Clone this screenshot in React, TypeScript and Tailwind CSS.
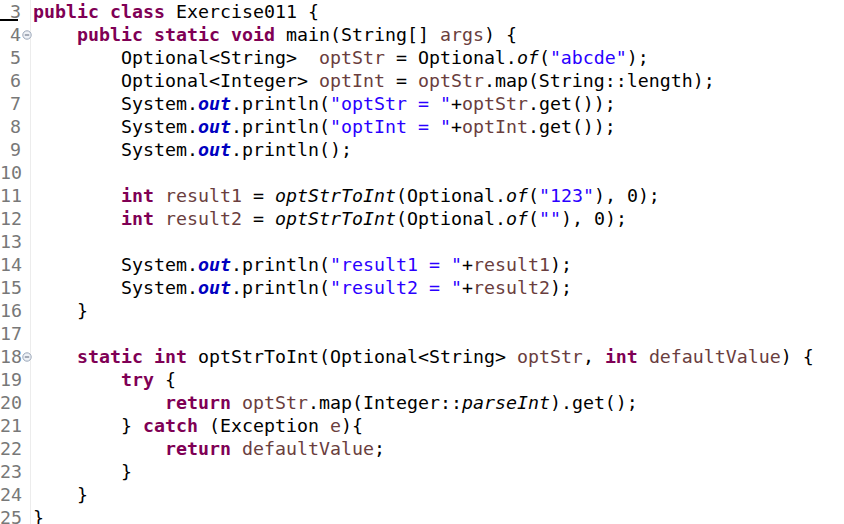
type Seg = [string, string?];

const K = 'k';
const V = 'v';
const S = 's';
const F = 'f';
const I = 'i';

const styles: Record<string, string> = {
  k: 'font-bold text-[#7f0055]',
  v: 'text-[#6a3e3e]',
  s: 'text-[#2a00ff]',
  f: 'font-bold italic text-[#0000c0]',
  i: 'italic text-black',
};

const lines: { n: number; fold?: boolean; segs: Seg[] }[] = [
  { n: 3, segs: [['public', K], [' '], ['class', K], [' Exercise011 {']] },
  { n: 4, fold: true, segs: [['    '], ['public', K], [' '], ['static', K], [' '], ['void', K], [' main(String[] '], ['args', V], [') {']] },
  { n: 5, segs: [['        Optional<String>  '], ['optStr', V], [' = Optional.'], ['of', I], ['('], ['"abcde"', S], [');']] },
  { n: 6, segs: [['        Optional<Integer> '], ['optInt', V], [' = '], ['optStr', V], ['.map(String::length);']] },
  { n: 7, segs: [['        System.'], ['out', F], ['.println('], ['"optStr = "', S], ['+'], ['optStr', V], ['.get());']] },
  { n: 8, segs: [['        System.'], ['out', F], ['.println('], ['"optInt = "', S], ['+'], ['optInt', V], ['.get());']] },
  { n: 9, segs: [['        System.'], ['out', F], ['.println();']] },
  { n: 10, segs: [] },
  { n: 11, segs: [['        '], ['int', K], [' '], ['result1', V], [' = '], ['optStrToInt', I], ['(Optional.'], ['of', I], ['('], ['"123"', S], ['), 0);']] },
  { n: 12, segs: [['        '], ['int', K], [' '], ['result2', V], [' = '], ['optStrToInt', I], ['(Optional.'], ['of', I], ['('], ['""', S], ['), 0);']] },
  { n: 13, segs: [] },
  { n: 14, segs: [['        System.'], ['out', F], ['.println('], ['"result1 = "', S], ['+'], ['result1', V], [');']] },
  { n: 15, segs: [['        System.'], ['out', F], ['.println('], ['"result2 = "', S], ['+'], ['result2', V], [');']] },
  { n: 16, segs: [['    }']] },
  { n: 17, segs: [] },
  { n: 18, fold: true, segs: [['    '], ['static', K], [' '], ['int', K], [' optStrToInt(Optional<String> '], ['optStr', V], [', '], ['int', K], [' '], ['defaultValue', V], [') {']] },
  { n: 19, segs: [['        '], ['try', K], [' {']] },
  { n: 20, segs: [['            '], ['return', K], [' '], ['optStr', V], ['.map(Integer::'], ['parseInt', I], [').get();']] },
  { n: 21, segs: [['        } '], ['catch', K], [' (Exception '], ['e', V], ['){']] },
  { n: 22, segs: [['            '], ['return', K], [' '], ['defaultValue', V], [';']] },
  { n: 23, segs: [['        }']] },
  { n: 24, segs: [['    }']] },
  { n: 25, segs: [['}']] },
];

const FoldIcon = () => (
  <svg width="10" height="10" viewBox="0 0 10 10" className="block">
    <circle cx="5" cy="5" r="4.2" fill="#eef1f6" stroke="#9aa6b8" strokeWidth="1" />
    <line x1="2.8" y1="5" x2="7.2" y2="5" stroke="#5a6478" strokeWidth="1" />
  </svg>
);

export default function App() {
  return (
    <div
      className="w-[844px] h-[524px] bg-white overflow-hidden flex text-[18.27px] leading-[23px] text-black"
      style={{ fontFamily: '"DejaVu Sans Mono", "Liberation Mono", monospace' }}
    >
      <div className="w-[31px] shrink-0 border-r border-[#ececec]">
        {lines.map(l => (
          <div key={l.n} className="relative h-[23px] flex items-center">
            <span className="w-[21px] text-right text-[#787878] shrink-0">{l.n}</span>
            {l.fold && (
              <span className="ml-px mt-px">
                <FoldIcon />
              </span>
            )}
            {l.n === 3 && <div className="absolute left-0 top-[19px] w-[18px] h-[2px] bg-black" />}
          </div>
        ))}
      </div>
      <div className="pl-[2px]">
        {lines.map(l => (
          <div key={l.n} className="h-[23px] whitespace-pre">
            {l.segs.map((s, i) => (
              <span key={i} className={s[1] ? styles[s[1]] : undefined}>
                {s[0]}
              </span>
            ))}
          </div>
        ))}
      </div>
    </div>
  );
}
